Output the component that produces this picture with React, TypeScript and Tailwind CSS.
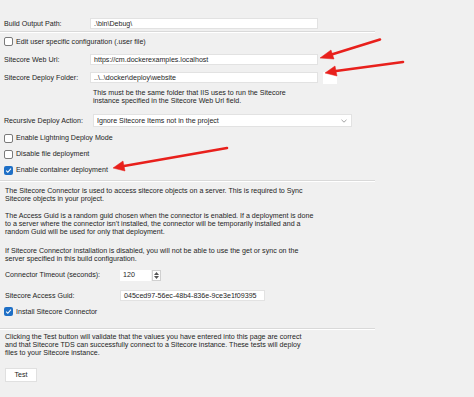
import React from "react";

const Check = ({ checked = false }: { checked?: boolean }) =>
  checked ? (
    <div className="w-[9px] h-[9px] rounded-[2px] bg-[#1e6fc6] flex items-center justify-center shrink-0">
      <svg width="7" height="7" viewBox="0 0 8 8">
        <path d="M1.3 4.2 L3.2 6 L6.8 1.8" fill="none" stroke="#fff" strokeWidth="1.2" />
      </svg>
    </div>
  ) : (
    <div className="w-[9px] h-[9px] rounded-[2px] border border-[#7a7a7a] bg-white shrink-0" />
  );

const Field = ({ text, w, className = "" }: { text: string; w: string; className?: string }) => (
  <div className={`h-full bg-white border border-[#e2e2e2] flex items-center pl-[3px] overflow-hidden whitespace-nowrap ${w} ${className}`}>{text}</div>
);

const Sep = () => <div className="w-[375px] h-[2px] border-t border-[#d9d9d9] border-b border-b-white" />;

export default function App() {
  return (
    <div
      className="relative w-[474px] h-[397px] bg-[#f0f0f0] overflow-hidden text-[7.1px] text-[#1e1e1e] leading-[8px] whitespace-nowrap"
      style={{ fontFamily: '"Liberation Sans", Arial, sans-serif' }}
    >
      <div className="flex flex-col pl-[4px]">
        <div className="h-[18px]" />
        <div className="h-[11px] flex items-center">
          <div className="w-[86px]">Build Output Path:</div>
          <Field text=".\bin\Debug\" w="w-[228px]" />
        </div>
        <div className="h-[2px]" />
        <div className="-ml-[4px]"><Sep /></div>
        <div className="h-[4px]" />
        <div className="h-[9px] flex items-center gap-[3px]">
          <Check />
          <div>Edit user specific configuration (.user file)</div>
        </div>
        <div className="h-[8px]" />
        <div className="h-[11px] flex items-center">
          <div className="w-[86px]">Sitecore Web Url:</div>
          <Field text="https://cm.dockerexamples.localhost" w="w-[228px]" />
        </div>
        <div className="h-[7px]" />
        <div className="h-[11px] flex items-center">
          <div className="w-[86px]">Sitecore Deploy Folder:</div>
          <Field text="..\..\docker\deploy\website" w="w-[228px]" />
          <div className="ml-[5px] w-[14px] h-[12px] bg-white mt-[1px]" />
        </div>
        <div className="h-[6px]" />
        <div className="pl-[89px] leading-[8px]">
          <div>This must be the same folder that IIS uses to run the Sitecore</div>
          <div>instance specified in the Sitecore Web Url field.</div>
        </div>
        <div className="h-[9px]" />
        <div className="h-[13px] flex items-center">
          <div className="w-[89px]">Recursive Deploy Action:</div>
          <div className="h-full w-[259px] bg-white border border-[#e2e2e2] flex items-center pl-[3px] pr-[4px] justify-between">
            <span>Ignore Sitecore Items not in the project</span>
            <svg width="6" height="4" viewBox="0 0 6 4">
              <path d="M0.5 0.8 L3 3.2 L5.5 0.8" fill="none" stroke="#8a8a8a" strokeWidth="0.8" />
            </svg>
          </div>
        </div>
        <div className="h-[6px]" />
        <div className="h-[10px] flex items-center gap-[3px]">
          <Check />
          <div>Enable Lightning Deploy Mode</div>
        </div>
        <div className="h-[6px]" />
        <div className="h-[10px] flex items-center gap-[3px]">
          <Check />
          <div>Disable file deployment</div>
        </div>
        <div className="h-[6px]" />
        <div className="h-[10px] flex items-center gap-[3px]">
          <Check checked />
          <div>Enable container deployment</div>
        </div>
        <div className="h-[5px]" />
        <div className="-ml-[4px]"><Sep /></div>
        <div className="h-[5px]" />
        <div className="pl-[1px]">
          <div>The Sitecore Connector is used to access sitecore objects on a server. This is required to Sync</div>
          <div>Sitecore objects in your project.</div>
        </div>
        <div className="h-[9px]" />
        <div className="pl-[1px]">
          <div>The Access Guid is a random guid chosen when the connector is enabled. If a deployment is done</div>
          <div>to a server where the connector isn't installed, the connector will be temporarily installed and a</div>
          <div>random Guid will be used for only that deployment.</div>
        </div>
        <div className="h-[11px]" />
        <div className="pl-[1px]">
          <div>If Sitecore Connector installation is disabled, you will not be able to use the get or sync on the</div>
          <div>server specified in this build configuration.</div>
        </div>
        <div className="h-[6px]" />
        <div className="h-[12px] flex items-center">
          <div className="w-[116px] pl-[1px]">Connector Timeout (seconds):</div>
          <div className="h-[11px] w-[31px] bg-white flex items-center pl-[3px]">120</div>
          <div className="ml-[1px] h-[11px] w-[9px] bg-white border border-[#d0d0d0] flex flex-col items-center justify-center gap-[1px]">
            <svg width="5" height="3" viewBox="0 0 5 3"><path d="M0 3 L2.5 0 L5 3 Z" fill="#555" /></svg>
            <svg width="5" height="3" viewBox="0 0 5 3"><path d="M0 0 L2.5 3 L5 0 Z" fill="#555" /></svg>
          </div>
        </div>
        <div className="h-[9px]" />
        <div className="h-[11px] flex items-center">
          <div className="w-[116px] pl-[1px]">Sitecore Access Guid:</div>
          <Field text="045ced97-56ec-48b4-836e-9ce3e1f09395" w="w-[145px]" />
        </div>
        <div className="h-[6px]" />
        <div className="h-[9px] flex items-center gap-[3px]">
          <Check checked />
          <div>Install Sitecore Connector</div>
        </div>
        <div className="h-[12px]" />
        <div className="-ml-[4px]"><Sep /></div>
        <div className="h-[3px]" />
        <div className="pl-[1px]">
          <div>Clicking the Test button will validate that the values you have entered into this page are correct</div>
          <div>and that Sitecore TDS can successfully connect to a Sitecore instance. These tests will deploy</div>
          <div>files to your Sitecore instance.</div>
        </div>
        <div className="h-[11px]" />
        <div className="h-[14px] w-[32px] bg-white border border-[#e0e0e0] flex items-center justify-center ml-[1px]">Test</div>
      </div>

      <svg className="absolute inset-0 pointer-events-none" width="474" height="397" viewBox="0 0 474 397">
        <g fill="#e8201c" stroke="#e8201c">
          <line x1="380" y1="39.5" x2="330" y2="55" strokeWidth="2.6" strokeLinecap="round" />
          <polygon points="320,58 331,50 334,59" strokeWidth="0.5" />
          <line x1="403" y1="62" x2="336" y2="71" strokeWidth="2.6" strokeLinecap="round" />
          <polygon points="325,73 335,66 337,76" strokeWidth="0.5" />
          <line x1="227" y1="148" x2="124" y2="166" strokeWidth="2.6" strokeLinecap="round" />
          <polygon points="113,168 123,161 125,171" strokeWidth="0.5" />
        </g>
      </svg>
    </div>
  );
}
